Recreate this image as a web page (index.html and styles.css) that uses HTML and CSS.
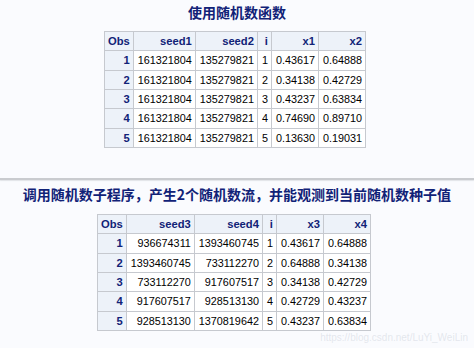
FILE: index.html
```html
<!DOCTYPE html>
<html lang="zh">
<head>
<meta charset="utf-8">
<link rel="stylesheet" href="styles.css">
</head>
<body>
<section class="block first">
  <h2 class="title">使用随机数函数</h2>
  <table class="data">
    <thead>
      <tr><th class="obs">Obs</th><th>seed1</th><th>seed2</th><th>i</th><th>x1</th><th>x2</th></tr>
    </thead>
    <tbody>
      <tr><th class="obs">1</th><td>161321804</td><td>135279821</td><td>1</td><td>0.43617</td><td>0.64888</td></tr>
      <tr><th class="obs">2</th><td>161321804</td><td>135279821</td><td>2</td><td>0.34138</td><td>0.42729</td></tr>
      <tr><th class="obs">3</th><td>161321804</td><td>135279821</td><td>3</td><td>0.43237</td><td>0.63834</td></tr>
      <tr><th class="obs">4</th><td>161321804</td><td>135279821</td><td>4</td><td>0.74690</td><td>0.89710</td></tr>
      <tr><th class="obs">5</th><td>161321804</td><td>135279821</td><td>5</td><td>0.13630</td><td>0.19031</td></tr>
    </tbody>
  </table>
</section>
<hr class="sep">
<section class="block second">
  <h2 class="title">调用随机数子程序，产生2个随机数流，并能观测到当前随机数种子值</h2>
  <table class="data">
    <thead>
      <tr><th class="obs">Obs</th><th>seed3</th><th>seed4</th><th>i</th><th>x3</th><th>x4</th></tr>
    </thead>
    <tbody>
      <tr><th class="obs">1</th><td>936674311</td><td>1393460745</td><td>1</td><td>0.43617</td><td>0.64888</td></tr>
      <tr><th class="obs">2</th><td>1393460745</td><td>733112270</td><td>2</td><td>0.64888</td><td>0.34138</td></tr>
      <tr><th class="obs">3</th><td>733112270</td><td>917607517</td><td>3</td><td>0.34138</td><td>0.42729</td></tr>
      <tr><th class="obs">4</th><td>917607517</td><td>928513130</td><td>4</td><td>0.42729</td><td>0.43237</td></tr>
      <tr><th class="obs">5</th><td>928513130</td><td>1370819642</td><td>5</td><td>0.43237</td><td>0.63834</td></tr>
    </tbody>
  </table>
  <div class="watermark">https://blog.csdn.net/LuYi_WeiLin</div>
</section>
</body>
</html>
```
FILE: styles.css
```css
html, body {
  margin: 0;
  padding: 0;
  background: #fafbfe;
}
body {
  width: 474px;
  height: 348px;
  overflow: hidden;
  font-family: "Liberation Sans", Arial, "Noto Sans CJK SC", sans-serif;
  position: relative;
}
.block {
  display: flex;
  flex-direction: column;
  align-items: center;
}
.title {
  margin: 0;
  font-family: "Noto Sans CJK SC", "Liberation Sans", sans-serif;
  font-size: 14px;
  font-weight: bold;
  color: #112277;
  line-height: 20px;
}
.first .title {
  margin-top: 2px;
  height: 29px;
}
.second .title {
  margin-top: 4px;
  height: 30px;
}
.data {
  border-collapse: collapse;
  background: #ffffff;
  font-size: 10.8px;
  color: #000000;
}
.data th, .data td {
  border: 1px solid #c6c9cf;
  padding: 2px 3.5px;
  height: 14.33px;
  line-height: 14px;
  text-align: right;
  white-space: nowrap;
}
.data th {
  background: #edf2f9;
  color: #112277;
  font-weight: bold;
  font-size: 11.2px;
}
.first .data {
  margin-left: -4px;
}
.second .data {
  margin-left: -6px;
}
.sep {
  margin: 30px 0 0 0;
  border: 0;
  height: 2px;
  background: #c9cbcf;
  box-shadow: 0 1px 1px #e2e4e8;
}
.watermark {
  position: absolute;
  right: 6px;
  bottom: 5px;
  font-size: 10px;
  color: rgba(200, 205, 215, 0.45);
}
```
